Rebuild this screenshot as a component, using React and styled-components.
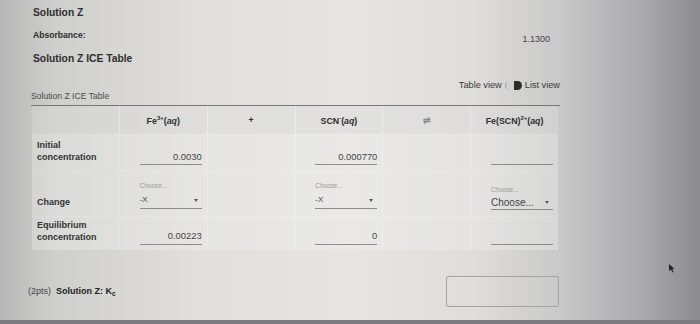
import React from "react";
import styled, { createGlobalStyle } from "styled-components";

const Global = createGlobalStyle`
  html, body {
    margin: 0;
    padding: 0;
  }
  body {
    width: 700px;
    height: 324px;
    overflow: hidden;
    font-family: "Liberation Sans", Arial, sans-serif;
    color: #2e2e2e;
    background: linear-gradient(
      90deg,
      #b7b7b7 0%,
      #cfcfcd 8%,
      #e0dfdb 28%,
      #e6e5e1 50%,
      #dedddb 68%,
      #c9c9c9 80%,
      #a9a9ac 92%,
      #8b8b90 100%
    );
  }
`;

const Page = styled.div`
  position: relative;
  width: 700px;
  height: 324px;
  padding: 6px 142px 0 32px;
  box-sizing: border-box;
  //darker strip at the bottom of the photo
  &::after {
    content: "";
    position: absolute;
    left: 0;
    right: 0;
    bottom: 0;
    height: 4px;
    background: #7d7d80;
  }
`;

const Title = styled.div`
  font-size: 10.3px;
  font-weight: 700;
  height: 13px;
  line-height: 13px;
  margin-left: 1px;
  margin-top: ${(p) => p.mt || 0}px;
`;

const Row = styled.div`
  display: flex;
  align-items: center;
  justify-content: ${(p) => p.justify || "space-between"};
  height: ${(p) => p.h || 12}px;
  margin-top: ${(p) => p.mt || 0}px;
`;

const SmallBold = styled.span`
  font-size: 8.6px;
  font-weight: 700;
  margin-left: 1px;
  margin-top: -2px;
`;

const Value = styled.span`
  font-size: 9px;
  color: #444;
  margin-right: 8px;
  margin-top: 6px;
`;

const ViewSwitch = styled.div`
  display: flex;
  align-items: center;
  gap: 3px;
  font-size: 9.2px;
  color: #3a3a3a;
  margin-right: -2px;
`;

const Track = styled.span`
  position: relative;
  display: inline-block;
  width: 16px;
  height: 9px;
  border-radius: 5px;
  background: #d2d2d2;
  border-left: 1px solid #9a9a9a;
`;

const Knob = styled.span`
  position: absolute;
  right: 0;
  top: 0;
  width: 8px;
  height: 9px;
  border-radius: 0 5px 5px 0;
  background: #2c2c2c;
`;

const Caption = styled.div`
  font-size: 8.6px;
  color: #4a4a4a;
  line-height: 10px;
  padding-bottom: 4px;
  border-bottom: 1.5px solid #777;
  margin-left: -1px;
  margin-right: -2px;
`;

const Grid = styled.div`
  display: grid;
  grid-template-columns: repeat(6, 1fr);
  grid-template-rows: 28px 35px 45px 33px;
  column-gap: 1px;
  row-gap: 1px;
  background: rgba(255, 255, 255, 0.35);
`;

const Cell = styled.div`
  display: flex;
  flex-direction: column;
  justify-content: ${(p) => (p.head ? "center" : "flex-end")};
  align-items: ${(p) => (p.head ? "center" : "stretch")};
  background: ${(p) => (p.head ? "rgba(0,0,0,0.05)" : "rgba(0,0,0,0.02)")};
  padding: ${(p) => (p.head ? "0" : `0 5px ${p.pb || 5}px 0`)};
  font-size: 8.8px;
  font-weight: ${(p) => (p.head ? 700 : 400)};
  color: ${(p) => (p.muted ? "#888" : "#2e2e2e")};
  sup {
    font-size: 6px;
  }
`;

const Label = styled.div`
  font-size: 9px;
  font-weight: 700;
  line-height: 12px;
  color: #333;
  padding-left: 5px;
  margin-bottom: ${(p) => p.mb || 0}px;
`;

const Field = styled.div`
  width: 62px;
  margin-left: auto;
  border-bottom: 1px solid #8c8c8c;
  text-align: right;
  font-size: 9.4px;
  color: #444;
  height: ${(p) => p.h || 14}px;
  line-height: 12px;
  box-sizing: border-box;
`;

const SelectBox = styled.div`
  width: 62px;
  margin-left: auto;
  display: flex;
  flex-direction: column;
`;

const SelectHint = styled.div`
  font-size: 6.4px;
  line-height: 8px;
  color: #999;
  margin-bottom: ${(p) => (p.big ? 2 : 5)}px;
`;

const SelectLine = styled.div`
  display: flex;
  justify-content: space-between;
  align-items: ${(p) => (p.big ? "center" : "flex-start")};
  border-bottom: 1px solid #8c8c8c;
  height: 14px;
  line-height: ${(p) => (p.big ? 12 : 10)}px;
  font-size: ${(p) => (p.big ? 10 : 8)}px;
  color: #444;
  padding-right: 4px;
  box-sizing: border-box;
`;

const Caret = styled.span`
  width: 0;
  height: 0;
  margin-top: ${(p) => (p.big ? 0 : 4)}px;
  border-left: 2.5px solid transparent;
  border-right: 2.5px solid transparent;
  border-top: 3px solid #555;
`;

const Footer = styled.div`
  display: flex;
  align-items: center;
  justify-content: space-between;
  margin-top: 26px;
  margin-left: -4px;
`;

const Points = styled.span`
  font-size: 9px;
  color: #444;
  b {
    margin-left: 5px;
    color: #222;
  }
  sub {
    font-size: 6.5px;
    vertical-align: -2px;
  }
`;

const AnswerBox = styled.div`
  width: 113px;
  height: 31px;
  border: 1px solid #a3a3a3;
  border-radius: 2px;
  box-sizing: border-box;
  margin-right: -1px;
`;

const Cursor = styled.svg`
  position: absolute;
  left: 668px;
  top: 263px;
`;

function Select({ hint, value, big }) {
  return (
    <SelectBox>
      <SelectHint big={big}>{hint}</SelectHint>
      <SelectLine big={big}>
        <span>{value}</span>
        <Caret big={big} />
      </SelectLine>
    </SelectBox>
  );
}

export default function App() {
  return (
    <Page>
      <Global />
      <Title>Solution Z</Title>
      <Row h={12} mt={11}>
        <SmallBold>Absorbance:</SmallBold>
        <Value>1.1300</Value>
      </Row>
      <Title mt={10}>Solution Z ICE Table</Title>
      <Row h={12} mt={14} justify="flex-end">
        <ViewSwitch>
          <span>Table view</span>
          <Track>
            <Knob />
          </Track>
          <span>List view</span>
        </ViewSwitch>
      </Row>
      <Caption>Solution Z ICE Table</Caption>
      <Grid>
        <Cell head />
        <Cell head>
          <span>
            Fe<sup>3+</sup>(<i>aq</i>)
          </span>
        </Cell>
        <Cell head>+</Cell>
        <Cell head>
          <span>
            SCN<sup>-</sup>(<i>aq</i>)
          </span>
        </Cell>
        <Cell head muted>⇌</Cell>
        <Cell head>
          <span>
            Fe(SCN)<sup>2+</sup>(<i>aq</i>)
          </span>
        </Cell>

        <Cell>
          <Label mb={2}>
            Initial
            <br />
            concentration
          </Label>
        </Cell>
        <Cell>
          <Field>0.0030</Field>
        </Cell>
        <Cell />
        <Cell>
          <Field>0.000770</Field>
        </Cell>
        <Cell />
        <Cell>
          <Field />
        </Cell>

        <Cell>
          <Label mb={3}>Change</Label>
        </Cell>
        <Cell pb={7}>
          <Select hint="Choose..." value="-X" />
        </Cell>
        <Cell />
        <Cell pb={7}>
          <Select hint="Choose..." value="-X" />
        </Cell>
        <Cell />
        <Cell pb={6}>
          <Select hint="Choose..." value="Choose..." big />
        </Cell>

        <Cell>
          <Label mb={2}>
            Equilibrium
            <br />
            concentration
          </Label>
        </Cell>
        <Cell>
          <Field h={15}>0.00223</Field>
        </Cell>
        <Cell />
        <Cell>
          <Field h={15}>0</Field>
        </Cell>
        <Cell />
        <Cell>
          <Field />
        </Cell>
      </Grid>
      <Footer>
        <Points>
          (2pts)
          <b>
            Solution Z: K<sub>c</sub>
          </b>
        </Points>
        <AnswerBox />
      </Footer>
      <Cursor width="8" height="10" viewBox="0 0 8 10">
        <path d="M1 1 L1 8 L3 6.5 L4.5 9.5 L5.5 9 L4.2 6 L6.5 6 Z" fill="#222" />
      </Cursor>
    </Page>
  );
}
